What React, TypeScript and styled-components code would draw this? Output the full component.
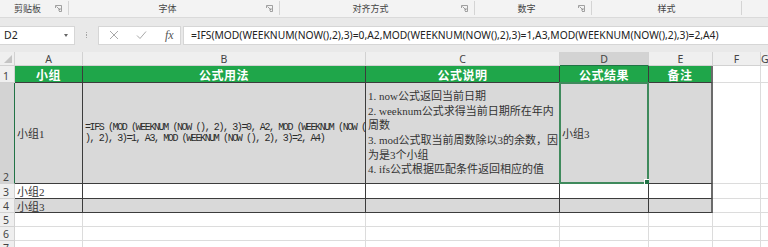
import React from 'react';
import styled, { createGlobalStyle, css } from 'styled-components';

const GlobalStyle = createGlobalStyle`
  html, body {
    margin: 0;
    padding: 0;
    background: #ffffff;
  }
  body {
    width: 768px;
    height: 247px;
    overflow: hidden;
    font-family: "Noto Sans", "Noto Sans CJK SC", sans-serif;
  }
`;

const GREEN = '#1fa64a';
const DARK = '#3c3c3c';
const LIGHT = '#dcdcdc';

const Page = styled.div`
  display: flex;
  flex-direction: column;
  width: 768px;
  height: 247px;
  overflow: hidden;
`;

/* ---------- ribbon group labels ---------- */

const Ribbon = styled.div`
  display: flex;
  height: 17px;
  background: #f3f3f3;
  border-bottom: 1px solid #dadada;
`;

const Group = styled.div<{ $w: number; $last?: boolean }>`
  display: flex;
  align-items: center;
  width: ${(p) => p.$w}px;
  flex: ${(p) => (p.$last ? '1' : 'none')};
  border-right: ${(p) => (p.$last ? 'none' : '1px solid #d4d4d4')};
  margin: 1px 0 2px;
`;

const GroupLabel = styled.span`
  flex: 1;
  text-align: center;
  font-family: "Noto Sans CJK SC", sans-serif;
  font-size: 9px;
  color: #444;
`;

const Launcher = styled.span`
  width: 13px;
  display: flex;
  justify-content: flex-start;
  align-items: center;
`;

const LauncherIcon = () => (
  <svg width="7" height="7" viewBox="0 0 7 7">
    <path d="M0.5 3 V0.5 H6.5 V6.5 H4" fill="none" stroke="#8a8a8a" strokeWidth="0.8" />
    <path d="M1.5 1.5 L5 5 M5 3 V5 H3" fill="none" stroke="#8a8a8a" strokeWidth="0.8" />
  </svg>
);

/* ---------- formula bar ---------- */

const FormulaArea = styled.div`
  display: flex;
  align-items: center;
  height: 34px;
  background: #e9e9e9;
  box-sizing: border-box;
`;

const NameBox = styled.div`
  display: flex;
  align-items: center;
  justify-content: space-between;
  width: 75px;
  height: 19px;
  padding: 0 4px;
  box-sizing: border-box;
  background: #fff;
  border: 1px solid #d6d6d6;
  border-left: none;
  font-size: 10.5px;
  color: #222;
`;

const Caret = styled.span`
  width: 0;
  height: 0;
  border-left: 2.5px solid transparent;
  border-right: 2.5px solid transparent;
  border-top: 3px solid #666;
  margin-right: 2px;
`;

const Grip = styled.div`
  width: 23px;
  display: flex;
  flex-direction: column;
  align-items: center;
  gap: 1px;
`;

const Dot = styled.span`
  width: 1.5px;
  height: 1.5px;
  background: #a6a6a6;
`;

const ActionBox = styled.div`
  display: flex;
  align-items: center;
  width: 83px;
  height: 19px;
  box-sizing: border-box;
  background: #fff;
  border: 1px solid #d6d6d6;
  padding-left: 10px;
  gap: 17px;
`;

const Fx = styled.span`
  font-family: "Liberation Serif", serif;
  font-style: italic;
  font-size: 12px;
  color: #555;
  margin-left: 1px;
`;

const FormulaInput = styled.div`
  flex: 1;
  height: 19px;
  margin-left: 2px;
  box-sizing: border-box;
  background: #fff;
  border: 1px solid #d6d6d6;
  border-right: none;
  padding-left: 7px;
  display: flex;
  align-items: center;
  font-family: "Noto Sans", sans-serif;
  font-size: 10.3px;
  color: #222;
  white-space: nowrap;
  overflow: hidden;
`;

/* ---------- sheet ---------- */

const Sheet = styled.div`
  display: grid;
  grid-template-columns: 15px 68px 283px 194px 89px 64px 48px 1fr;
  grid-template-rows: 14px 17px 101px 15px 14px 14px 14px 14px;
  flex: 1;
  overflow: hidden;
  background: #fff;
`;

const HeadCell = styled.div<{ $sel?: boolean; $row?: boolean }>`
  box-sizing: border-box;
  display: flex;
  align-items: ${(p) => (p.$row ? 'flex-end' : 'center')};
  justify-content: ${(p) => (p.$row ? 'flex-start' : 'center')};
  padding-left: ${(p) => (p.$row ? '3px' : '0')};
  background: ${(p) => (p.$sel ? '#d3d3d3' : '#efefef')};
  border-right: 1px solid ${(p) => (p.$sel && p.$row ? '#217346' : '#d2d2d2')};
  border-bottom: 1px solid ${(p) => (p.$sel && !p.$row ? '#217346' : '#d2d2d2')};
  font-family: "Noto Sans", sans-serif;
  font-size: 10.5px;
  line-height: 12px;
  color: #444;
  position: relative;
`;

const Corner = styled(HeadCell)`
  &::after {
    content: '';
    position: absolute;
    right: 2px;
    bottom: 2px;
    border-left: 8px solid transparent;
    border-bottom: 8px solid #c4c4c4;
  }
`;

type Fill = 'green' | 'gray' | 'none';

const Cell = styled.div<{ $fill?: Fill; $table?: boolean; $edge?: boolean; $center?: boolean }>`
  box-sizing: border-box;
  position: relative;
  display: flex;
  align-items: center;
  justify-content: ${(p) => (p.$center ? 'center' : 'flex-start')};
  padding: 0 2px;
  white-space: nowrap;
  background: ${(p) => (p.$fill === 'green' ? GREEN : p.$fill === 'gray' ? '#d9d9d9' : '#fff')};
  border-right: 1px solid ${(p) => (p.$table ? DARK : LIGHT)};
  border-bottom: 1px solid ${(p) => (p.$table ? DARK : LIGHT)};
  ${(p) =>
    p.$edge &&
    css`
      border-right: 2px solid #6b6b6b;
    `}
  font-family: "Liberation Serif", "Noto Sans CJK SC", serif;
  font-size: 11px;
  color: #333;
`;

const Title = styled.span`
  font-family: "Noto Sans CJK SC", sans-serif;
  font-weight: 700;
  font-size: 12px;
  letter-spacing: 0.5px;
  color: #fff;
`;

const FormulaText = styled.div`
  font-family: "Liberation Mono", "Noto Sans CJK SC", monospace;
  font-size: 10px;
  letter-spacing: -1.4px;
  line-height: 11px;
  color: #2a2a2a;
`;

const Notes = styled.div`
  font-family: "Liberation Serif", "Noto Sans CJK SC", serif;
  font-size: 11px;
  line-height: 14.6px;
  color: #333;
`;

const Selection = styled.div`
  position: absolute;
  left: -1px;
  top: -1px;
  right: -1px;
  bottom: -1px;
  border: 2px solid #3f8a5c;
  pointer-events: none;
  &::after {
    content: '';
    position: absolute;
    right: -4px;
    bottom: -4px;
    width: 5px;
    height: 5px;
    background: #217346;
    border: 1px solid #fff;
  }
`;

const groups = [
  { label: '剪贴板', w: 68, launcher: true },
  { label: '字体', w: 210, launcher: true },
  { label: '对齐方式', w: 194, launcher: true },
  { label: '数字', w: 116, launcher: true },
  { label: '样式', w: 149, launcher: false },
];

const cols = ['A', 'B', 'C', 'D', 'E', 'F', 'G'];

const notes = [
  '1. now公式返回当前日期',
  '2. weeknum公式求得当前日期所在年内',
  '周数',
  '3. mod公式取当前周数除以3的余数，因',
  '为是3个小组',
  '4. ifs公式根据匹配条件返回相应的值',
];

function Blank({ rows }: { rows: number[] }) {
  return (
    <>
      {rows.map((r) => (
        <React.Fragment key={r}>
          <HeadCell $row>{r}</HeadCell>
          {cols.map((c) => (
            <Cell key={c} />
          ))}
        </React.Fragment>
      ))}
    </>
  );
}

export default function App() {
  return (
    <Page>
      <GlobalStyle />
      <Ribbon>
        {groups.map((g) => (
          <Group key={g.label} $w={g.w}>
            <GroupLabel>{g.label}</GroupLabel>
            {g.launcher && (
              <Launcher>
                <LauncherIcon />
              </Launcher>
            )}
          </Group>
        ))}
        <Group $w={0} $last />
      </Ribbon>

      <FormulaArea>
        <NameBox>
          D2
          <Caret />
        </NameBox>
        <Grip>
          <Dot />
          <Dot />
          <Dot />
        </Grip>
        <ActionBox>
          <svg width="10" height="10" viewBox="0 0 10 10">
            <path d="M1 1 L9 9 M9 1 L1 9" stroke="#a8a8a8" strokeWidth="1" />
          </svg>
          <svg width="11" height="10" viewBox="0 0 11 10">
            <path d="M1 5.5 L4 8.5 L10 1.5" fill="none" stroke="#a8a8a8" strokeWidth="1" />
          </svg>
          <Fx>fx</Fx>
        </ActionBox>
        <FormulaInput>
          =IFS(MOD(WEEKNUM(NOW(),2),3)=0,A2,MOD(WEEKNUM(NOW(),2),3)=1,A3,MOD(WEEKNUM(NOW(),2),3)=2,A4)
        </FormulaInput>
      </FormulaArea>

      <Sheet>
        <Corner />
        {cols.map((c) => (
          <HeadCell key={c} $sel={c === 'D'}>
            {c}
          </HeadCell>
        ))}

        <HeadCell $row>1</HeadCell>
        <Cell $fill="green" $table $center>
          <Title>小组</Title>
        </Cell>
        <Cell $fill="green" $table $center>
          <Title>公式用法</Title>
        </Cell>
        <Cell $fill="green" $table $center>
          <Title>公式说明</Title>
        </Cell>
        <Cell $fill="green" $table $center>
          <Title>公式结果</Title>
        </Cell>
        <Cell $fill="green" $table $center $edge>
          <Title>备注</Title>
        </Cell>
        <Cell />
        <Cell />

        <HeadCell $row $sel>
          2
        </HeadCell>
        <Cell $fill="gray" $table>
          小组1
        </Cell>
        <Cell $fill="gray" $table>
          <FormulaText>
            =IFS (MOD (WEEKNUM (NOW (), 2), 3)=0, A2, MOD (WEEKNUM (NOW (
            <br />
            ), 2), 3)=1, A3, MOD (WEEKNUM (NOW (), 2), 3)=2, A4)
          </FormulaText>
        </Cell>
        <Cell $fill="gray" $table>
          <Notes>
            {notes.map((n) => (
              <div key={n}>{n}</div>
            ))}
          </Notes>
        </Cell>
        <Cell $fill="gray" $table>
          小组3
          <Selection />
        </Cell>
        <Cell $fill="gray" $table $edge />
        <Cell />
        <Cell />

        <HeadCell $row>3</HeadCell>
        <Cell $table>小组2</Cell>
        <Cell $table />
        <Cell $table />
        <Cell $table />
        <Cell $table $edge />
        <Cell />
        <Cell />

        <HeadCell $row>4</HeadCell>
        <Cell $fill="gray" $table>
          小组3
        </Cell>
        <Cell $fill="gray" $table />
        <Cell $fill="gray" $table />
        <Cell $fill="gray" $table />
        <Cell $fill="gray" $table $edge />
        <Cell />
        <Cell />

        <Blank rows={[5, 6, 7]} />
      </Sheet>
    </Page>
  );
}
